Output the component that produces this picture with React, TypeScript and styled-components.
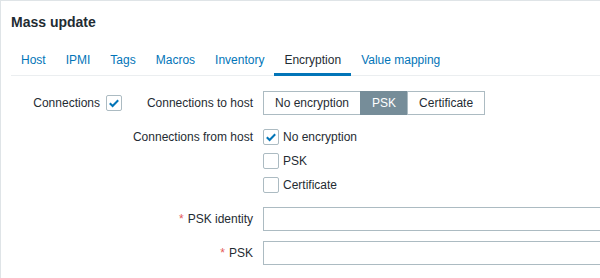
import React, { useState } from 'react'
import styled, { createGlobalStyle } from 'styled-components'

const GlobalStyle = createGlobalStyle`
  html, body {
    margin: 0;
    padding: 0;
    background: #fff;
    overflow: hidden;
  }
  body {
    font-family: "Liberation Sans", Arial, sans-serif;
    font-size: 12px;
    color: #1f2c33;
  }
  * { box-sizing: border-box; }
`

const tabs = ['Host', 'IPMI', 'Tags', 'Macros', 'Inventory', 'Encryption', 'Value mapping']
const modes = ['No encryption', 'PSK', 'Certificate']

const Check: React.FC<{ checked: boolean; onClick?: () => void }> = ({ checked, onClick }) => (
  <CheckBox onClick={onClick}>
    {checked && (
      <svg width="14" height="14" viewBox="0 0 14 14">
        <polyline points="2.8,7.2 5.6,10 11.2,4.2" fill="none" stroke="#0275b8" strokeWidth="2" />
      </svg>
    )}
  </CheckBox>
)

const App: React.FC = () => {
  const [tab, setTab] = useState('Encryption')
  const [mode, setMode] = useState('PSK')
  const [connections, setConnections] = useState(true)
  const [from, setFrom] = useState<Record<string, boolean>>({ 'No encryption': true, PSK: false, Certificate: false })

  return (
    <>
      <GlobalStyle />
      <Dialog>
        <Title>Mass update</Title>
        <TabList>
          {tabs.map(t => (
            <Tab key={t} $active={t === tab} onClick={() => setTab(t)}>{t}</Tab>
          ))}
        </TabList>
        <Form>
          <OuterLabel>
            <span>Connections</span>
            <Check checked={connections} onClick={() => setConnections(!connections)} />
          </OuterLabel>
          <Nested>
            <Label>Connections to host</Label>
            <Segmented>
              {modes.map(m => (
                <Segment key={m} $on={m === mode} onClick={() => setMode(m)}>{m}</Segment>
              ))}
            </Segmented>

            <Label>Connections from host</Label>
            <CheckList>
              {modes.map(m => (
                <CheckLine key={m}>
                  <Check checked={from[m]} onClick={() => setFrom(prev => ({ ...prev, [m]: !prev[m] }))} />
                  <span>{m}</span>
                </CheckLine>
              ))}
            </CheckList>

            <Label $required>PSK identity</Label>
            <TextInput />

            <Label $required>PSK</Label>
            <TextInput />
          </Nested>
        </Form>
      </Dialog>
    </>
  )
}

const Dialog = styled.div`
  width: 100%;
  height: 278px;
  overflow: hidden;
  border-left: 1px solid #dfe4e7;
  border-top: 1px solid #dfe4e7;
  background: #fff;
`

const Title = styled.h4`
  margin: 0;
  padding: 12px 10px 15px;
  font-size: 14px;
  line-height: 18px;
  font-weight: bold;
  color: #1f2c33;
`

const TabList = styled.div`
  display: flex;
  margin-left: 10px;
  border-bottom: 1px solid #ebeef0;
`

const Tab = styled.div<{ $active?: boolean }>`
  padding: 7px 10px 6px;
  line-height: 14px;
  margin-bottom: -1px;
  border-bottom: 3px solid ${p => (p.$active ? '#0275b8' : 'transparent')};
  color: ${p => (p.$active ? '#1f2c33' : '#0275b8')};
  white-space: nowrap;
  cursor: pointer;
`

const Form = styled.div`
  display: flex;
  align-items: flex-start;
  padding: 15px 0 0 10px;
`

const OuterLabel = styled.div`
  width: 111px;
  flex: 0 0 111px;
  height: 24px;
  display: flex;
  align-items: center;
  justify-content: flex-end;
  gap: 6px;
`

const Nested = styled.div`
  display: grid;
  grid-template-columns: 131px 453px;
  column-gap: 10px;
  row-gap: 10px;
`

const Label = styled.div<{ $required?: boolean }>`
  height: 24px;
  display: flex;
  align-items: center;
  justify-content: flex-end;
  white-space: nowrap;
  &::before {
    content: ${p => (p.$required ? "'*'" : 'none')};
    color: #e45959;
    margin-right: 4px;
  }
`

const CheckBox = styled.span`
  width: 16px;
  height: 16px;
  flex: 0 0 16px;
  border: 1px solid #acbbc2;
  border-radius: 2px;
  background: #fff;
  display: inline-flex;
  align-items: center;
  justify-content: center;
  cursor: pointer;
`

const Segmented = styled.div`
  display: flex;
  height: 24px;
`

const Segment = styled.div<{ $on?: boolean }>`
  padding: 0 11px;
  line-height: 22px;
  border: 1px solid ${p => (p.$on ? '#768d99' : '#acbbc2')};
  margin-left: -1px;
  background: ${p => (p.$on ? '#768d99' : '#fff')};
  color: ${p => (p.$on ? '#fff' : '#1f2c33')};
  white-space: nowrap;
  cursor: pointer;
  &:first-child { margin-left: 0; }
`

const CheckList = styled.div`
  display: flex;
  flex-direction: column;
`

const CheckLine = styled.label`
  height: 24px;
  display: flex;
  align-items: center;
  gap: 4px;
`

const TextInput = styled.input`
  width: 453px;
  height: 24px;
  border: 1px solid #acbbc2;
  background: #fff;
  padding: 0 5px;
  font: inherit;
  outline: none;
`

export default App
